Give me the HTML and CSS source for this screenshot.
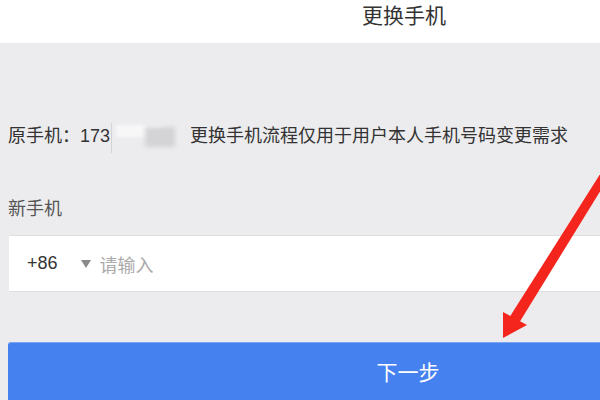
FILE: index.html
```html
<!DOCTYPE html>
<html lang="zh-CN">
<head>
<meta charset="utf-8">
<title>更换手机</title>
<link rel="stylesheet" href="styles.css">
</head>
<body>
<div class="page">
  <header class="header">
    <h1 class="title">更换手机</h1>
  </header>
  <main class="main">
    <p class="info">原手机：173<span class="mask"><span class="mask-a"></span><span class="mask-b"></span></span>更换手机流程仅用于用户本人手机号码变更需求</p>
    <div class="label">新手机</div>
    <div class="field">
      <span class="code">+86</span>
      <span class="caret"></span>
      <span class="placeholder">请输入</span>
    </div>
    <button class="next">下一步</button>
  </main>
  <svg class="arrow" width="600" height="400" viewBox="0 0 600 400">
    <polygon points="604,168 612,172 519,323 509,318" fill="#f4251c"/>
    <polygon points="503,338 503,312 527,325" fill="#f4251c"/>
  </svg>
</div>
</body>
</html>
```
FILE: styles.css
```css
html, body {
  margin: 0;
  padding: 0;
  overflow: hidden;
  background: #ececee;
}
.page {
  position: relative;
  width: 808px;
  height: 400px;
  font-family: "Liberation Sans", "Noto Sans CJK SC", sans-serif;
  background: #ececee;
}
.header {
  height: 43px;
  background: #ffffff;
}
.title {
  margin: 0;
  text-align: center;
  font-size: 21px;
  font-weight: normal;
  line-height: 32px;
  color: #333333;
}
.main {
  padding: 80px 0 0 8px;
}
.info {
  margin: 0;
  font-size: 18px;
  line-height: 26px;
  color: #333333;
  white-space: nowrap;
}
.mask {
  position: relative;
  display: inline-block;
  vertical-align: top;
  width: 79px;
  height: 30px;
  margin-left: 1px;
  border-left: 1px solid #d4d4d6;
  box-sizing: border-box;
}
.mask-a {
  position: absolute;
  left: 4px;
  top: 2px;
  width: 46px;
  height: 12px;
  background: #f7f7f8;
  filter: blur(1.5px);
}
.mask-b {
  position: absolute;
  left: 33px;
  top: 4px;
  width: 30px;
  height: 20px;
  background: #d4d4d6;
  filter: blur(2px);
}
.label {
  margin-top: 43px;
  font-size: 18px;
  line-height: 26px;
  color: #555555;
}
.field {
  display: flex;
  align-items: center;
  margin-top: 13px;
  margin-left: 1px;
  height: 55px;
  background: #ffffff;
  border-top: 1px solid #dedede;
  border-bottom: 1px solid #dedede;
  padding-left: 18px;
}
.code {
  font-size: 18px;
  color: #333333;
}
.caret {
  width: 0;
  height: 0;
  margin-left: 23px;
  margin-top: 1px;
  border-left: 5px solid transparent;
  border-right: 5px solid transparent;
  border-top: 8px solid #8a8a8a;
}
.placeholder {
  margin-left: 9px;
  font-size: 18px;
  color: #ababab;
}
.next {
  display: block;
  width: 800px;
  height: 64px;
  margin-top: 50px;
  padding: 0 0 8px 0;
  border: none;
  border-top: 1px solid #7aa3f3;
  border-radius: 3px 0 0 0;
  background: #4681f0;
  color: #ffffff;
  font-family: "Liberation Sans", "Noto Sans CJK SC", sans-serif;
  font-size: 21px;
  text-align: center;
}
.arrow {
  position: absolute;
  left: 0;
  top: 0;
  pointer-events: none;
}
```
